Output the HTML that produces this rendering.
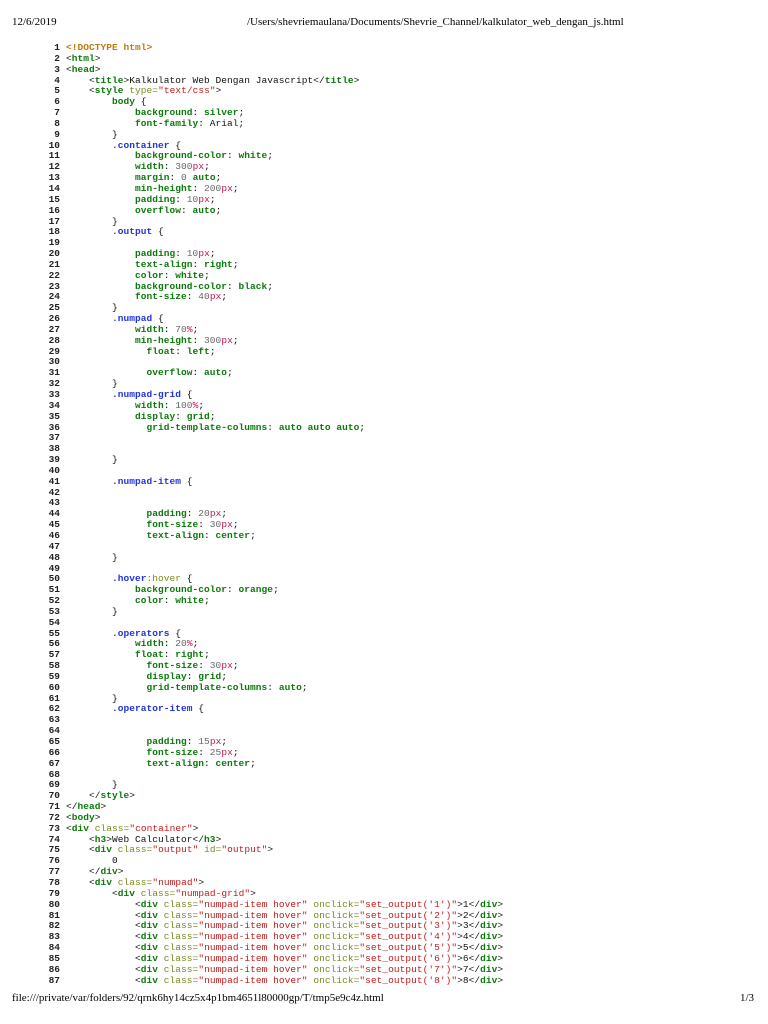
<!DOCTYPE html>
<html><head><style>
body{margin:0;width:768px;height:1024px;background:#fff;position:relative;overflow:hidden}
.hd{position:absolute;font-family:"Liberation Serif",serif;font-size:11px;color:#000;white-space:nowrap}
pre{position:absolute;left:0;top:43px;margin:0;font-family:"Liberation Mono",monospace;font-size:9.5px;line-height:10.84px;color:#111;letter-spacing:0.05px}
.ln{display:inline-block;width:60px;text-align:right;padding-right:6px;color:#222;font-weight:bold;letter-spacing:0}
.t{color:#0a7a0a;font-weight:bold}.a{color:#7a8a20}.s{color:#c41a1a}.sel{color:#2233dd;font-weight:bold}
.p{color:#0a7a0a;font-weight:bold}.n{color:#666}.u{color:#c01050}.d{color:#c07a10;font-weight:bold}
</style></head><body>
<div class="hd" style="left:12px;top:16px">12/6/2019</div>
<div class="hd" style="left:247px;top:16px">/Users/shevriemaulana/Documents/Shevrie_Channel/kalkulator_web_dengan_js.html</div>
<div class="hd" style="left:12px;top:992px">file:///private/var/folders/92/qrnk6hy14cz5x4p1bm4651l80000gp/T/tmp5e9c4z.html</div>
<div class="hd" style="left:740px;top:992px">1/3</div>
<pre><span class="ln">1</span><span class="d">&lt;!DOCTYPE html&gt;</span>
<span class="ln">2</span>&lt;<span class="t">html</span>&gt;
<span class="ln">3</span>&lt;<span class="t">head</span>&gt;
<span class="ln">4</span>    &lt;<span class="t">title</span>&gt;Kalkulator Web Dengan Javascript&lt;/<span class="t">title</span>&gt;
<span class="ln">5</span>    &lt;<span class="t">style</span> <span class="a">type=</span><span class="s">"text/css"</span>&gt;
<span class="ln">6</span>        <span class="p">body</span> {
<span class="ln">7</span>            <span class="p">background</span>: <span class="p">silver</span>;
<span class="ln">8</span>            <span class="p">font-family</span>: Arial;
<span class="ln">9</span>        }
<span class="ln">10</span>        <span class="sel">.container</span> {
<span class="ln">11</span>            <span class="p">background-color</span>: <span class="p">white</span>;
<span class="ln">12</span>            <span class="p">width</span>: <span class="n">300</span><span class="u">px</span>;
<span class="ln">13</span>            <span class="p">margin</span>: <span class="n">0</span> <span class="p">auto</span>;
<span class="ln">14</span>            <span class="p">min-height</span>: <span class="n">200</span><span class="u">px</span>;
<span class="ln">15</span>            <span class="p">padding</span>: <span class="n">10</span><span class="u">px</span>;
<span class="ln">16</span>            <span class="p">overflow</span>: <span class="p">auto</span>;
<span class="ln">17</span>        }
<span class="ln">18</span>        <span class="sel">.output</span> {
<span class="ln">19</span>
<span class="ln">20</span>            <span class="p">padding</span>: <span class="n">10</span><span class="u">px</span>;
<span class="ln">21</span>            <span class="p">text-align</span>: <span class="p">right</span>;
<span class="ln">22</span>            <span class="p">color</span>: <span class="p">white</span>;
<span class="ln">23</span>            <span class="p">background-color</span>: <span class="p">black</span>;
<span class="ln">24</span>            <span class="p">font-size</span>: <span class="n">40</span><span class="u">px</span>;
<span class="ln">25</span>        }
<span class="ln">26</span>        <span class="sel">.numpad</span> {
<span class="ln">27</span>            <span class="p">width</span>: <span class="n">70</span><span class="u">%</span>;
<span class="ln">28</span>            <span class="p">min-height</span>: <span class="n">300</span><span class="u">px</span>;
<span class="ln">29</span>              <span class="p">float</span>: <span class="p">left</span>;
<span class="ln">30</span>
<span class="ln">31</span>              <span class="p">overflow</span>: <span class="p">auto</span>;
<span class="ln">32</span>        }
<span class="ln">33</span>        <span class="sel">.numpad-grid</span> {
<span class="ln">34</span>            <span class="p">width</span>: <span class="n">100</span><span class="u">%</span>;
<span class="ln">35</span>            <span class="p">display</span>: <span class="p">grid</span>;
<span class="ln">36</span>              <span class="p">grid-template-columns</span>: <span class="p">auto auto auto</span>;
<span class="ln">37</span>
<span class="ln">38</span>
<span class="ln">39</span>        }
<span class="ln">40</span>
<span class="ln">41</span>        <span class="sel">.numpad-item</span> {
<span class="ln">42</span>
<span class="ln">43</span>
<span class="ln">44</span>              <span class="p">padding</span>: <span class="n">20</span><span class="u">px</span>;
<span class="ln">45</span>              <span class="p">font-size</span>: <span class="n">30</span><span class="u">px</span>;
<span class="ln">46</span>              <span class="p">text-align</span>: <span class="p">center</span>;
<span class="ln">47</span>
<span class="ln">48</span>        }
<span class="ln">49</span>
<span class="ln">50</span>        <span class="sel">.hover</span><span class="a">:hover</span> {
<span class="ln">51</span>            <span class="p">background-color</span>: <span class="p">orange</span>;
<span class="ln">52</span>            <span class="p">color</span>: <span class="p">white</span>;
<span class="ln">53</span>        }
<span class="ln">54</span>
<span class="ln">55</span>        <span class="sel">.operators</span> {
<span class="ln">56</span>            <span class="p">width</span>: <span class="n">20</span><span class="u">%</span>;
<span class="ln">57</span>            <span class="p">float</span>: <span class="p">right</span>;
<span class="ln">58</span>              <span class="p">font-size</span>: <span class="n">30</span><span class="u">px</span>;
<span class="ln">59</span>              <span class="p">display</span>: <span class="p">grid</span>;
<span class="ln">60</span>              <span class="p">grid-template-columns</span>: <span class="p">auto</span>;
<span class="ln">61</span>        }
<span class="ln">62</span>        <span class="sel">.operator-item</span> {
<span class="ln">63</span>
<span class="ln">64</span>
<span class="ln">65</span>              <span class="p">padding</span>: <span class="n">15</span><span class="u">px</span>;
<span class="ln">66</span>              <span class="p">font-size</span>: <span class="n">25</span><span class="u">px</span>;
<span class="ln">67</span>              <span class="p">text-align</span>: <span class="p">center</span>;
<span class="ln">68</span>
<span class="ln">69</span>        }
<span class="ln">70</span>    &lt;/<span class="t">style</span>&gt;
<span class="ln">71</span>&lt;/<span class="t">head</span>&gt;
<span class="ln">72</span>&lt;<span class="t">body</span>&gt;
<span class="ln">73</span>&lt;<span class="t">div</span> <span class="a">class=</span><span class="s">"container"</span>&gt;
<span class="ln">74</span>    &lt;<span class="t">h3</span>&gt;Web Calculator&lt;/<span class="t">h3</span>&gt;
<span class="ln">75</span>    &lt;<span class="t">div</span> <span class="a">class=</span><span class="s">"output"</span> <span class="a">id=</span><span class="s">"output"</span>&gt;
<span class="ln">76</span>        0
<span class="ln">77</span>    &lt;/<span class="t">div</span>&gt;
<span class="ln">78</span>    &lt;<span class="t">div</span> <span class="a">class=</span><span class="s">"numpad"</span>&gt;
<span class="ln">79</span>        &lt;<span class="t">div</span> <span class="a">class=</span><span class="s">"numpad-grid"</span>&gt;
<span class="ln">80</span>            &lt;<span class="t">div</span> <span class="a">class=</span><span class="s">"numpad-item hover"</span> <span class="a">onclick=</span><span class="s">"set_output('1')"</span>&gt;1&lt;/<span class="t">div</span>&gt;
<span class="ln">81</span>            &lt;<span class="t">div</span> <span class="a">class=</span><span class="s">"numpad-item hover"</span> <span class="a">onclick=</span><span class="s">"set_output('2')"</span>&gt;2&lt;/<span class="t">div</span>&gt;
<span class="ln">82</span>            &lt;<span class="t">div</span> <span class="a">class=</span><span class="s">"numpad-item hover"</span> <span class="a">onclick=</span><span class="s">"set_output('3')"</span>&gt;3&lt;/<span class="t">div</span>&gt;
<span class="ln">83</span>            &lt;<span class="t">div</span> <span class="a">class=</span><span class="s">"numpad-item hover"</span> <span class="a">onclick=</span><span class="s">"set_output('4')"</span>&gt;4&lt;/<span class="t">div</span>&gt;
<span class="ln">84</span>            &lt;<span class="t">div</span> <span class="a">class=</span><span class="s">"numpad-item hover"</span> <span class="a">onclick=</span><span class="s">"set_output('5')"</span>&gt;5&lt;/<span class="t">div</span>&gt;
<span class="ln">85</span>            &lt;<span class="t">div</span> <span class="a">class=</span><span class="s">"numpad-item hover"</span> <span class="a">onclick=</span><span class="s">"set_output('6')"</span>&gt;6&lt;/<span class="t">div</span>&gt;
<span class="ln">86</span>            &lt;<span class="t">div</span> <span class="a">class=</span><span class="s">"numpad-item hover"</span> <span class="a">onclick=</span><span class="s">"set_output('7')"</span>&gt;7&lt;/<span class="t">div</span>&gt;
<span class="ln">87</span>            &lt;<span class="t">div</span> <span class="a">class=</span><span class="s">"numpad-item hover"</span> <span class="a">onclick=</span><span class="s">"set_output('8')"</span>&gt;8&lt;/<span class="t">div</span>&gt;
</pre>
</body></html>
